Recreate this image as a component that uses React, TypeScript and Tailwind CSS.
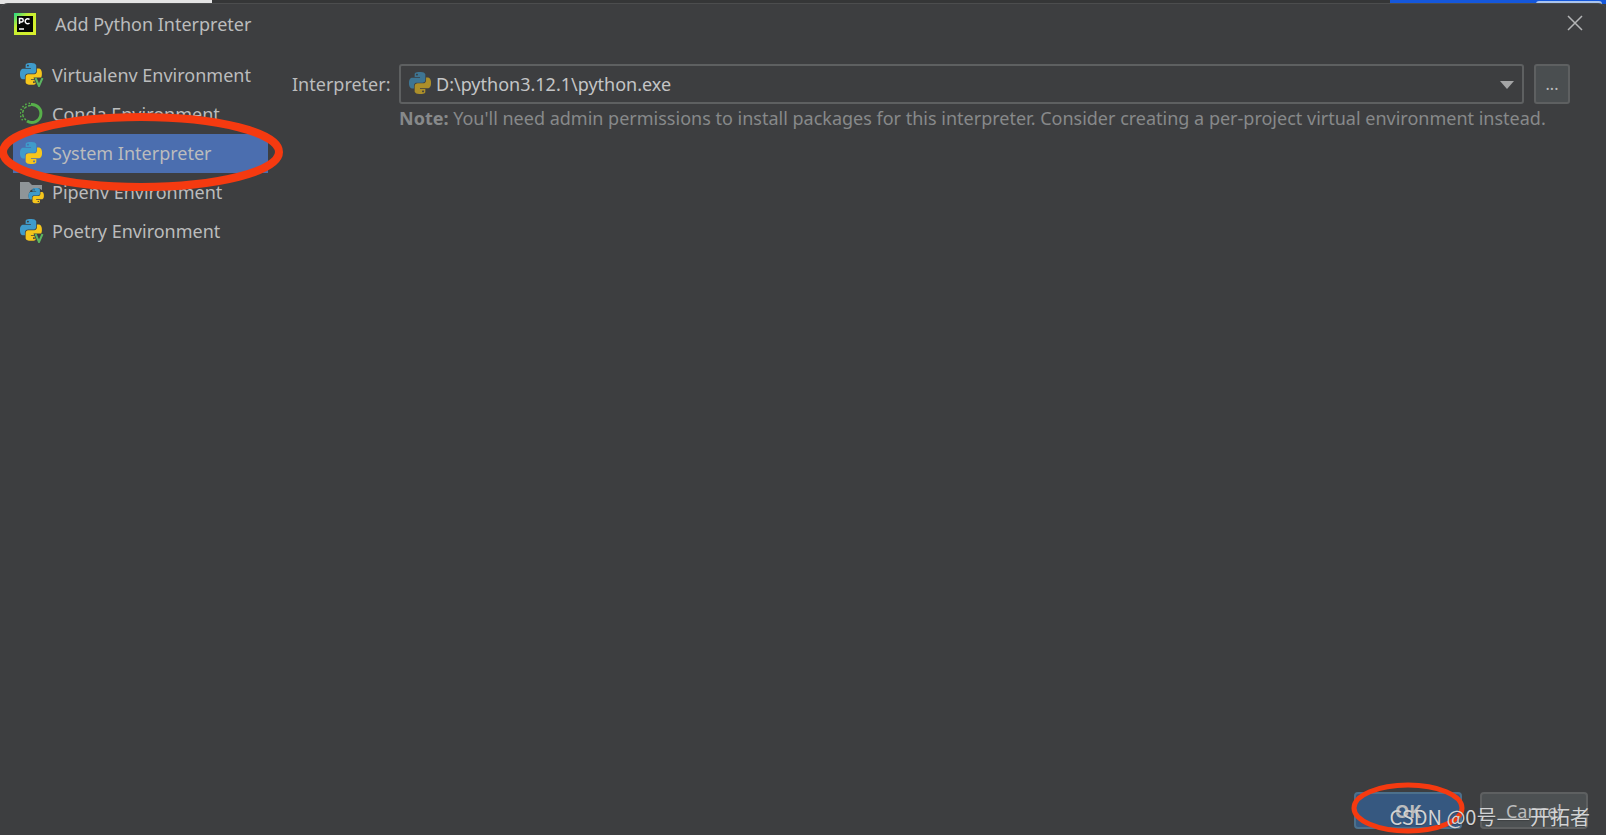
import { useState } from 'react';

type EnvKind = 'virtualenv' | 'conda' | 'system' | 'pipenv' | 'poetry';

const ENVIRONMENTS: { id: EnvKind; label: string }[] = [
  { id: 'virtualenv', label: 'Virtualenv Environment' },
  { id: 'conda', label: 'Conda Environment' },
  { id: 'system', label: 'System Interpreter' },
  { id: 'pipenv', label: 'Pipenv Environment' },
  { id: 'poetry', label: 'Poetry Environment' },
];

// One snake of the Python logo, the other is the same path turned by 180 degrees
const SNAKE =
  'M14.25.18l.9.2.73.26.59.3.45.32.34.34.25.34.16.33.1.3.04.26.02.2-.01.13V8.5l-.05.63-.13.55-.21.46-.26.38-.3.31-.33.25-.35.19-.35.14-.33.1-.3.07-.26.04-.21.02H8.77l-.69.05-.59.14-.5.22-.41.27-.33.32-.27.35-.2.36-.15.37-.1.35-.07.32-.04.27-.02.21v3.06H3.17l-.21-.03-.28-.07-.32-.12-.35-.18-.36-.26-.36-.36-.35-.46-.32-.59-.28-.73-.21-.88-.14-1.05-.05-1.23.06-1.22.16-1.04.24-.87.32-.71.36-.57.4-.44.42-.33.42-.24.4-.16.36-.1.32-.05.24-.01h.16l.06.01h8.16v-.83H6.18l-.01-2.75-.02-.37.05-.34.11-.31.17-.28.25-.26.31-.23.38-.2.44-.18.51-.15.58-.12.64-.1.71-.06.77-.04.84-.02 1.27.05zm-6.3 1.98l-.23.33-.08.41.08.41.23.34.33.22.41.09.41-.09.33-.22.23-.34.08-.41-.08-.41-.23-.33-.33-.22-.41-.09-.41.09z';

const Snakes = () => (
  <>
    <path d={SNAKE} fill="#3f9bcb" />
    <path d={SNAKE} fill="#f6c61c" transform="rotate(180 12 12)" />
  </>
);

const PythonIcon = ({ className = '' }: { className?: string }) => (
  <svg viewBox="0 0 24 24" className={`size-[22px] shrink-0 ${className}`} aria-hidden="true">
    <Snakes />
  </svg>
);

const VenvIcon = () => (
  <svg viewBox="0 0 24 24" className="size-6 shrink-0" aria-hidden="true">
    <g transform="scale(.91)"><Snakes /></g>
    <path d="M13.500 14.500h10.500l-3 9.500h-4z" fill="#3d3e40" />
    <path d="M15.500 15l3.500 8 3.500-8" fill="none" stroke="#5cb562" strokeWidth="2" />
  </svg>
);

const CondaIcon = () => (
  <svg viewBox="0 0 24 24" className="size-6 shrink-0" fill="none" stroke="#57b04a" aria-hidden="true">
    <path d="M11 2.500a9 9 0 1 1-4 16.500" strokeWidth="3" />
    <path d="M11 3.500a8 8 0 0 0-5 14.500" strokeWidth="1.500" strokeDasharray="3 1.500" />
    <path d="M10 1.200a10.500 10.500 0 0 0-6.500 18" strokeWidth="1.500" strokeDasharray="1.500 2" />
  </svg>
);

const PipenvIcon = () => (
  <svg viewBox="0 0 24 24" className="size-6 shrink-0" aria-hidden="true">
    <path d="M0 2h9l3 3h10v14H0z" fill="#8f9598" />
    <circle cx="16.500" cy="16" r="8" fill="#3d3e40" />
    <g transform="translate(8.500 8) scale(.64)"><Snakes /></g>
  </svg>
);

const EnvIcon = ({ kind }: { kind: EnvKind }) => {
  if (kind === 'conda') return <CondaIcon />;
  if (kind === 'pipenv') return <PipenvIcon />;
  if (kind === 'system') return <PythonIcon className="mr-[2px]" />;
  return <VenvIcon />;
};

const PyCharmIcon = () => (
  <svg viewBox="0 0 22 22" className="size-[22px] shrink-0" aria-hidden="true">
    <defs>
      <linearGradient id="pycharm" x1="0" y1="0" x2="1" y2="1">
        <stop offset="0" stopColor="#21d789" />
        <stop offset=".35" stopColor="#c5ee32" />
        <stop offset="1" stopColor="#dcf02c" />
      </linearGradient>
    </defs>
    <path d="M0 0h22v22H0z" fill="url(#pycharm)" />
    <path d="M3 3h16v16H3z" fill="#050805" />
    <path
      d="M5.500 11V5.500h2a1.600 1.600 0 0 1 0 3.400h-2M15.500 6.500a2.500 2.500 0 1 0 0 3.500M5 16h5"
      fill="none" stroke="#fff" strokeWidth="1.500"
    />
  </svg>
);

const App = () => {
  const [selected, setSelected] = useState<EnvKind>('system');

  return (
    <div className="min-h-screen flex flex-col bg-[#3d3e40] text-[#bbbcbd] text-lg leading-6 font-['Noto_Sans','Noto_Sans_CJK_SC',sans-serif] overflow-hidden">
      {/* Windows behind the dialog */}
      <div className="flex h-1 bg-[#353637]">
        <div className="w-[212px] bg-[#e4e4e4]" />
        <div className="flex-1 border-b border-[#555657]" />
        <div className="flex w-[216px] justify-end bg-[#1457dc] pr-1">
          <div className="mt-px w-[66px] rounded-t-full bg-[#a9c4ee]" />
        </div>
      </div>

      <div className="relative -mt-px flex flex-1 flex-col rounded-t-lg border-t border-[#4c4d4e] bg-[#3d3e40]">
        {/* Title bar */}
        <header className="flex h-[52px] items-start pt-2 pl-[14px] pr-[23px]">
          <div className="flex flex-1 items-center gap-[19px]">
            <PyCharmIcon />
            <h1>Add Python Interpreter</h1>
          </div>
          <button type="button" aria-label="Close" className="mt-[3px]">
            <svg viewBox="0 0 16 16" className="size-4" stroke="#b4b5b6" strokeWidth="1.500" aria-hidden="true">
              <path d="M1 1l14 14M15 1L1 15" />
            </svg>
          </button>
        </header>

        <main className="flex flex-1 pl-[13px] pr-9">
          <nav className="relative w-[255px] shrink-0">
            {ENVIRONMENTS.map((env) => (
              <button
                key={env.id}
                type="button"
                onClick={() => setSelected(env.id)}
                className={`flex h-[39px] w-full items-center gap-2 pb-px pl-[7px] text-left ${
                  selected === env.id ? 'bg-[#4b6eaf]' : ''
                }`}
              >
                <EnvIcon kind={env.id} />
                {env.label}
              </button>
            ))}
            {/* Highlight mark */}
            <svg viewBox="0 0 284 78" className="pointer-events-none absolute top-[57px] -left-[13px] w-[284px]" aria-hidden="true">
              <ellipse cx="141" cy="39" rx="138" ry="35" fill="none" stroke="#f53a10" strokeWidth="8" />
            </svg>
          </nav>

          <section className="flex min-w-0 flex-1 pt-2 pl-6">
            <label htmlFor="interpreter" className="w-[107px] shrink-0 pt-2">Interpreter:</label>
            <div className="min-w-0 flex-1">
              <div className="flex gap-[10px]">
                <div className="relative flex-1">
                  <select
                    id="interpreter"
                    className="h-10 w-full appearance-none rounded-[3px] border-2 border-[#5e6061] bg-transparent pr-10 pl-[35px] text-[#c4c5c6]"
                  >
                    <option>D:\python3.12.1\python.exe</option>
                  </select>
                  <PythonIcon className="pointer-events-none absolute top-[8px] left-[10px] opacity-60" />
                  <svg viewBox="0 0 14 8" className="pointer-events-none absolute top-[17px] right-[10px] w-[14px]" aria-hidden="true">
                    <path d="M0 0h14L7 8z" fill="#a4a5a6" />
                  </svg>
                </div>
                <button type="button" aria-label="Browse" className="h-10 w-9 rounded-[3px] border-2 border-[#5e6061] bg-[#4a4e50] text-base">
                  ...
                </button>
              </div>
              <p className="mt-[2px] whitespace-nowrap text-[#87898a]">
                <strong>Note:</strong> You'll need admin permissions to install packages for this interpreter. Consider
                creating a per-project virtual environment instead.
              </p>
            </div>
          </section>
        </main>

        <footer className="relative flex justify-end gap-[18px] pr-[18px] pb-[6px]">
          <div className="relative">
            <button type="button" className="h-[37px] w-[108px] rounded-[4px] border-2 border-[#4c708c] bg-[#365880] font-bold">
              OK
            </button>
            <svg viewBox="0 0 114 52" className="pointer-events-none absolute -top-[10px] -left-[3px] w-[114px]" aria-hidden="true">
              <ellipse cx="57" cy="26" rx="54" ry="23" fill="none" stroke="#f53a10" strokeWidth="5" />
            </svg>
          </div>
          <button type="button" className="h-[37px] w-[108px] rounded-[4px] border-2 border-[#5e6061] bg-[#4c5052]">
            Cancel
          </button>
          <span className="pointer-events-none absolute right-4 bottom-[6px] whitespace-nowrap font-['Noto_Sans_CJK_SC',sans-serif] text-xl leading-6 text-[#d2d3d4] text-shadow-xs">
            CSDN @0号——开拓者
          </span>
        </footer>
      </div>
    </div>
  );
};

export default App;
